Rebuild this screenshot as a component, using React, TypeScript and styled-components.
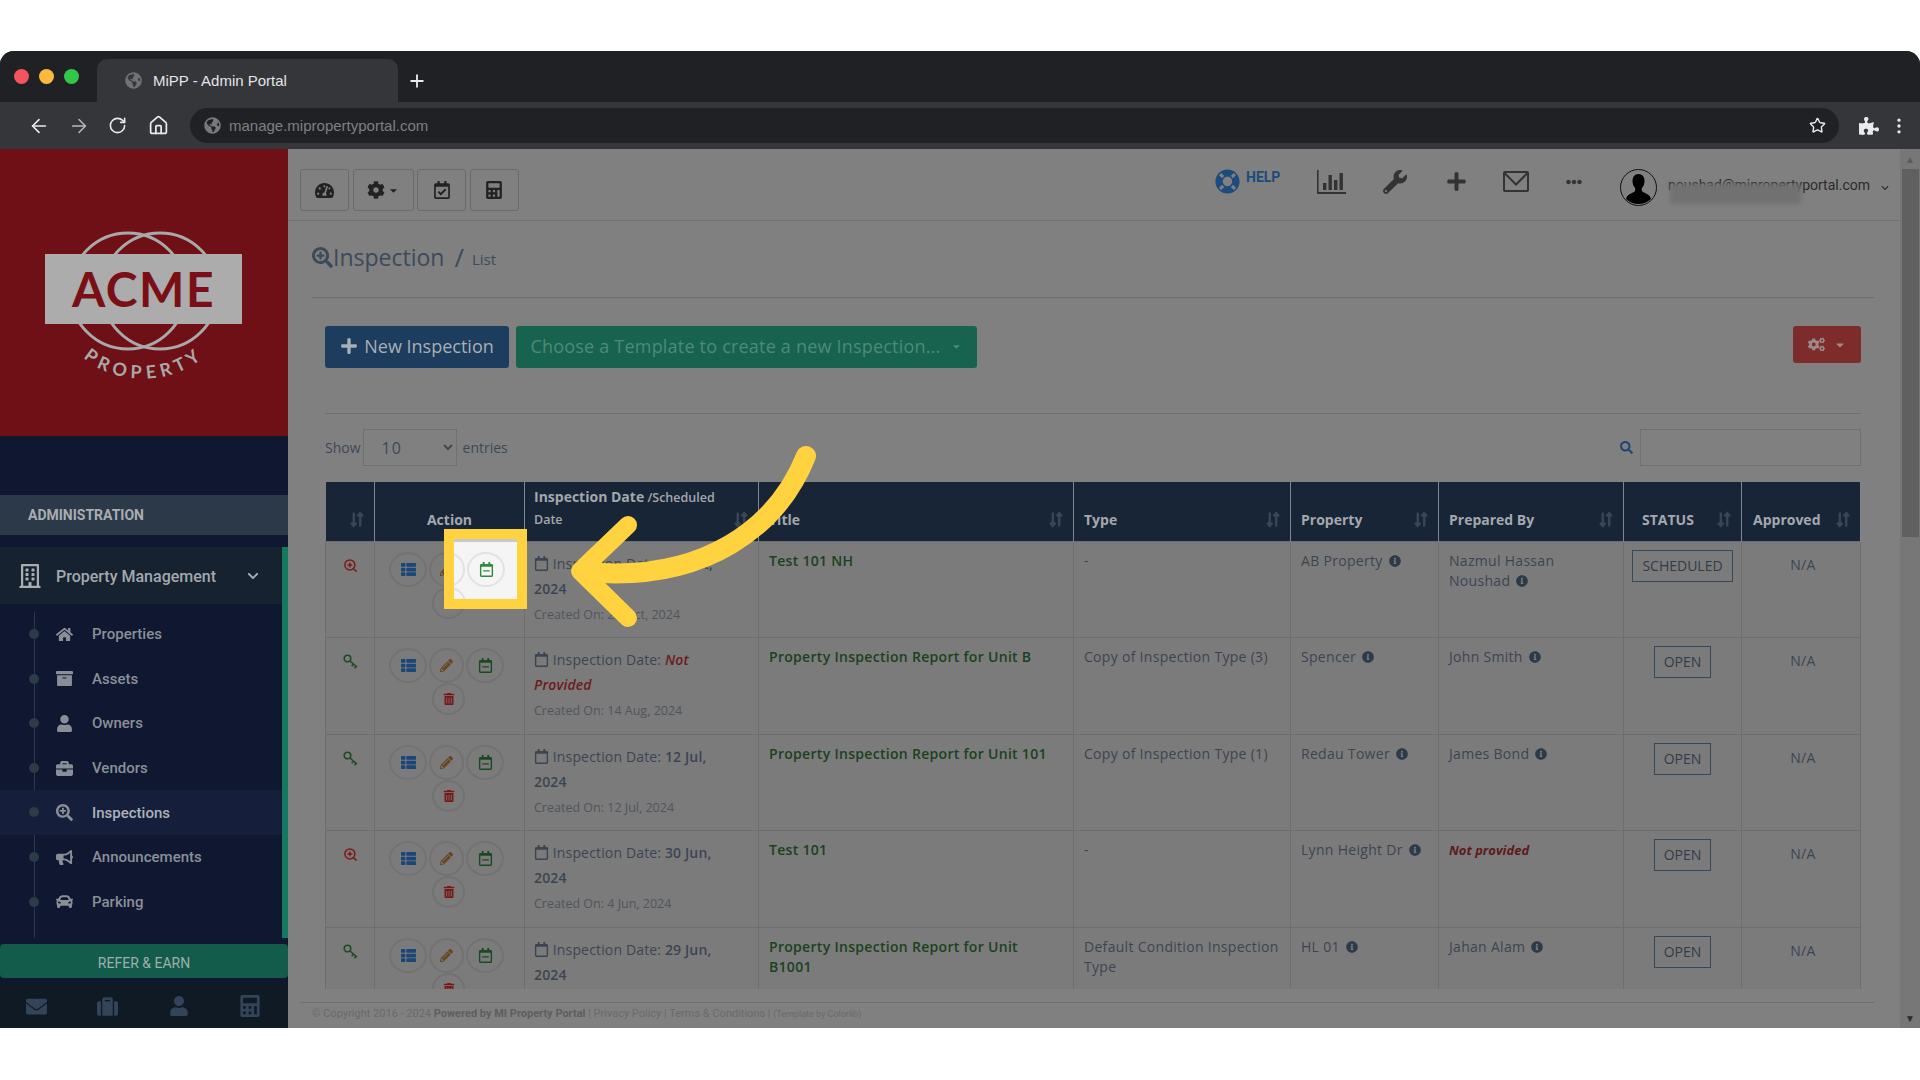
import React from "react";
import styled, { createGlobalStyle } from "styled-components";
import {
  FaTachometerAlt,
  FaCog,
  FaCogs,
  FaCaretDown,
  FaRegCalendarCheck,
  FaCalculator,
  FaLifeRing,
  FaWrench,
  FaPlus,
  FaEllipsisH,
  FaSearchPlus,
  FaSearch,
  FaRegBuilding,
  FaChevronDown,
  FaHome,
  FaArchive,
  FaUser,
  FaBriefcase,
  FaSuitcase,
  FaBullhorn,
  FaCar,
  FaEnvelope,
  FaThList,
  FaPencilAlt,
  FaRegCalendarMinus,
  FaTrashAlt,
  FaRegCalendar,
  FaInfoCircle,
  FaGlobeAmericas,
  FaPuzzlePiece,
  FaCalendarAlt
} from "react-icons/fa";
import { ArrowLeft, ArrowRight, RotateCw, Home, Star, Plus, EllipsisVertical, ZoomIn } from "lucide-react";

const GlobalStyle = createGlobalStyle`
  html, body {
    margin: 0;
    padding: 0;
    background: #fff;
    height: 1080px;
    overflow: hidden;
  }
  * { box-sizing: border-box; }
`;

const navItems = [
  { label: "Properties", icon: <FaHome /> },
  { label: "Assets", icon: <FaArchive /> },
  { label: "Owners", icon: <FaUser /> },
  { label: "Vendors", icon: <FaBriefcase /> },
  { label: "Inspections", icon: <FaSearchPlus />, active: true },
  { label: "Announcements", icon: <FaBullhorn /> },
  { label: "Parking", icon: <FaCar /> },
  { label: "", icon: <FaCalendarAlt /> }
];

const columns = [
  { label: "", pad: 9 },
  { label: "Action", center: true, pad: 9 },
  { label: "Inspection Date", sub: "/Scheduled Date", pad: 9 },
  { label: "Title", pad: 10 },
  { label: "Type", pad: 10 },
  { label: "Property", pad: 10 },
  { label: "Prepared By", pad: 10 },
  { label: "STATUS", pad: 18 },
  { label: "Approved", pad: 11 }
];

const colWidths = [49, 150, 234, 315, 217, 148, 185, 118, 119];

const rows = [
  {
    kind: "search",
    date: "23 Oct,",
    year: "2024",
    created: "23 Oct, 2024",
    title: "Test 101 NH",
    type: "-",
    property: "AB Property",
    preparedBy: "Nazmul Hassan Noushad",
    status: "SCHEDULED"
  },
  {
    kind: "key",
    date: "",
    created: "14 Aug, 2024",
    title: "Property Inspection Report for Unit B",
    type: "Copy of Inspection Type (3)",
    property: "Spencer",
    preparedBy: "John Smith",
    status: "OPEN"
  },
  {
    kind: "key",
    date: "12 Jul,",
    year: "2024",
    created: "12 Jul, 2024",
    title: "Property Inspection Report for Unit 101",
    type: "Copy of Inspection Type (1)",
    property: "Redau Tower",
    preparedBy: "James Bond",
    status: "OPEN"
  },
  {
    kind: "search",
    date: "30 Jun,",
    year: "2024",
    created: "4 Jun, 2024",
    title: "Test 101",
    type: "-",
    property: "Lynn Height Dr",
    preparedBy: "",
    status: "OPEN"
  },
  {
    kind: "key",
    date: "29 Jun,",
    year: "2024",
    created: "",
    title: "Property Inspection Report for Unit B1001",
    type: "Default Condition Inspection Type",
    property: "HL 01",
    preparedBy: "Jahan Alam",
    status: "OPEN"
  }
];

const App: React.FC<{}> = () => {
  return (
    <Page>
      <GlobalStyle />
      <BrowserWindow>
        <TabStrip>
          <Lights>
            <Light color="#f4545b" />
            <Light color="#fcb93f" />
            <Light color="#32c748" />
          </Lights>
          <Tab>
            <FaGlobeAmericas size={17} color="#6f7276" />
            <TabTitle>MiPP - Admin Portal</TabTitle>
          </Tab>
          <NewTab>
            <Plus size={20} strokeWidth={2.2} />
          </NewTab>
        </TabStrip>
        <Toolbar>
          <NavIcons>
            <ArrowLeft size={22} strokeWidth={1.8} />
            <ArrowRight size={22} strokeWidth={1.6} color="#b9bbbe" />
            <RotateCw size={19} />
            <HomeGlyph size={21} />
          </NavIcons>
          <AddressBar>
            <FaGlobeAmericas size={17} color="#76797d" />
            <Url>manage.mipropertyportal.com</Url>
            <Star size={17} color="#e8eaed" />
          </AddressBar>
          <ToolbarEnd>
            <FaPuzzlePiece size={20} />
            <EllipsisVertical size={20} />
          </ToolbarEnd>
        </Toolbar>

        <Viewport>
          <Sidebar>
            <LogoBlock>
              <AcmeLogo />
            </LogoBlock>
            <SectionBar>ADMINISTRATION</SectionBar>
            <SideMenu>
              <GroupRow>
                <FaRegBuilding size={24} color="#a9adb2" />
                <GroupLabel>Property Management</GroupLabel>
                <FaChevronDown size={12} color="#a9adb2" />
              </GroupRow>
              <NavList>
                {navItems.map((item, i) => (
                  <NavRow key={i} active={item.active}>
                    <NavDot />
                    <NavIcon>{item.icon}</NavIcon>
                    <NavLabel active={item.active}>{item.label}</NavLabel>
                  </NavRow>
                ))}
              </NavList>
            </SideMenu>
            <ReferButton>REFER &amp; EARN</ReferButton>
            <SideFooter>
              <FaEnvelope size={21} />
              <FaSuitcase size={21} />
              <FaUser size={20} />
              <FaCalculator size={22} />
            </SideFooter>
          </Sidebar>

          <Main>
            <TopBar>
              <ButtonGroup>
                <TopButton>
                  <FaTachometerAlt size={19} />
                </TopButton>
                <TopButton wide>
                  <FaCog size={18} />
                  <FaCaretDown size={11} />
                </TopButton>
                <TopButton>
                  <FaRegCalendarCheck size={18} />
                </TopButton>
                <TopButton>
                  <FaCalculator size={18} />
                </TopButton>
              </ButtonGroup>
              <TopRight>
                <HelpLink>
                  <FaLifeRing size={25} />
                  <HelpText>HELP</HelpText>
                </HelpLink>
                <TopIcon width={65}>
                  <svg width="29" height="24" viewBox="0 0 29 24" fill="#333">
                    <path d="M0 0h1.6v22H29v2H0z" />
                    <path d="M6 13h3.4v7H6zM11.5 5h3.4v15h-3.4zM17 10h3.4v10H17zM22.5 3h3.4v17h-3.4z" />
                  </svg>
                </TopIcon>
                <TopIcon width={62}>
                  <FaWrench size={24} color="#333" />
                </TopIcon>
                <TopIcon width={60}>
                  <FaPlus size={21} color="#333" />
                </TopIcon>
                <TopIcon width={59}>
                  <svg width="26" height="21" viewBox="0 0 26 21" fill="none" stroke="#333" strokeWidth="2">
                    <rect x="1" y="1" width="24" height="19" rx="1" />
                    <path d="M1 1.500l12 12 12-12" />
                  </svg>
                </TopIcon>
                <TopIcon width={57}>
                  <FaEllipsisH size={16} color="#333" />
                </TopIcon>
                <UserBlock>
                  <svg width="37" height="37" viewBox="0 0 37 37">
                    <circle cx="18.500" cy="18.500" r="18" fill="#808080" stroke="#111" strokeWidth="1" />
                    <path
                      d="M18.500 5c-4 0-6 3-6 7 0 3 1 5 2.500 7 .6 1 .4 3-1 4-3 1.600-7 2.600-8 7a18 18 0 0 0 25 0c-1-4.400-5-5.400-8-7-1.400-1-1.600-3-1-4 1.500-2 2.500-4 2.500-7 0-4-2-7-6-7z"
                      fill="#000"
                    />
                  </svg>
                  <UserEmail>noushad@mipropertyportal.com</UserEmail>
                  <FaChevronDown size={8} color="#333" />
                  <EmailBlur />
                </UserBlock>
              </TopRight>
            </TopBar>

            <Content>
              <TitleRow>
                <FaSearchPlus size={21} color="#3c4a5a" />
                <PageTitle>Inspection</PageTitle>
                <TitleSlash>/</TitleSlash>
                <TitleSmall>List</TitleSmall>
              </TitleRow>
              <Panel>
                <ActionRow>
                  <PrimaryButton>
                    <FaPlus size={18} />
                    New Inspection
                  </PrimaryButton>
                  <TemplateButton>
                    Choose a Template to create a new Inspection...
                    <FaCaretDown size={11} />
                  </TemplateButton>
                  <ToolsButton>
                    <FaCogs size={17} />
                    <FaCaretDown size={12} />
                  </ToolsButton>
                </ActionRow>
                <TableControls>
                  <LengthControl>
                    Show
                    <LengthSelect defaultValue="10">
                      <option value="10">10</option>
                    </LengthSelect>
                    entries
                  </LengthControl>
                  <SearchControl>
                    <FaSearch size={13} color="#1e4673" />
                    <SearchInput />
                  </SearchControl>
                </TableControls>
                <TableClip>
                  <Table>
                    <colgroup>
                      {colWidths.map((w, i) => (
                        <col key={i} width={w} />
                      ))}
                    </colgroup>
                    <thead>
                      <tr>
                        {columns.map((col, i) => (
                          <HeadCell key={i} center={col.center} pad={col.pad}>
                            {col.label}
                            {col.sub && <HeadSub> {col.sub}</HeadSub>}
                            {i !== 1 && <SortMark />}
                          </HeadCell>
                        ))}
                      </tr>
                    </thead>
                    <tbody>
                      {rows.map(row => (
                        <BodyRow key={row.title}>
                          <IconCell>
                            {row.kind === "search" ? <ZoomIn size={15} strokeWidth={2.4} color="#7e1a1a" /> : <KeyMark />}
                          </IconCell>
                          <ActionCell>
                            <ActionWrap>
                              <CircleButton width={38}>
                                <FaThList size={15} color="#1a4778" />
                              </CircleButton>
                              <CircleButton width={35}>
                                <FaPencilAlt size={13} color="#66461c" />
                              </CircleButton>
                              <CircleButton width={38}>
                                <FaRegCalendarMinus size={15} color="#1a4a20" />
                              </CircleButton>
                              <CircleButton width={33} short>
                                <FaTrashAlt size={12} color="#7a1818" />
                              </CircleButton>
                            </ActionWrap>
                          </ActionCell>
                          <DateCell>
                            <DateLine>
                              <FaRegCalendar size={15} />
                              &nbsp;Inspection Date:{" "}
                              {row.date ? <DateValue>{row.date}</DateValue> : <NotProvided>Not</NotProvided>}
                            </DateLine>
                            <DateLine>
                              {row.year ? <DateValue>{row.year}</DateValue> : <NotProvided>Provided</NotProvided>}
                            </DateLine>
                            {row.created && <CreatedLine>Created On: {row.created}</CreatedLine>}
                          </DateCell>
                          <TitleCell>{row.title}</TitleCell>
                          <TextCell>{row.type}</TextCell>
                          <TextCell>
                            {row.property} <InfoIcon size={12} />
                          </TextCell>
                          <TextCell>
                            {row.preparedBy ? (
                              <>
                                {row.preparedBy} <InfoIcon size={12} />
                              </>
                            ) : (
                              <MissingPerson>Not provided</MissingPerson>
                            )}
                          </TextCell>
                          <StatusCell>
                            <StatusBadge>{row.status}</StatusBadge>
                          </StatusCell>
                          <ApprovedCell>N/A</ApprovedCell>
                        </BodyRow>
                      ))}
                    </tbody>
                  </Table>
                </TableClip>
              </Panel>
            </Content>

            <PageFooter>
              © Copyright 2016 - 2024 <FooterStrong>Powered by MI Property Portal</FooterStrong> | Privacy Policy | Terms
              &amp; Conditions | <FooterSmall>(Template by Colorlib)</FooterSmall>
            </PageFooter>
          </Main>

          <ScrollTrack>
            <ScrollArrow>▲</ScrollArrow>
            <ScrollThumb />
            <ScrollArrow>▼</ScrollArrow>
          </ScrollTrack>

          <Spotlight>
            <SpotlightEdge />
            <GhostCircle />
            <GhostDelete />
            <SpotlightButton>
              <FaRegCalendarMinus size={15} color="#2f8a3c" />
            </SpotlightButton>
          </Spotlight>
          <PointerArrow width="270" height="190" viewBox="0 0 270 190" fill="none" stroke="#ffd23f" strokeLinecap="round" strokeLinejoin="round">
            <path d="M250 15C222 85 150 142 30 131" strokeWidth="20" />
            <path d="M72 84L24 130L72 177" strokeWidth="18" />
          </PointerArrow>
        </Viewport>
      </BrowserWindow>
    </Page>
  );
};

export default App;

const AcmeLogo: React.FC<{}> = () => (
  <svg width="288" height="287" viewBox="0 0 288 287">
    <g fill="none" stroke="#a9a9a9" strokeWidth="3">
      <circle cx="128" cy="142" r="58" />
      <circle cx="160" cy="142" r="58" />
    </g>
    <rect x="45" y="105" width="197" height="70" fill="#acacac" />
    <text x="143.500" y="158" textAnchor="middle" fontFamily="Lato, sans-serif" fontWeight="700" fontSize="48" letterSpacing="1.500" fill="#7a1016">
      ACME
    </text>
    <path id="logoArc" d="M80 205C110 238 178 238 208 203" fill="none" />
    <text fontFamily="Lato, sans-serif" fontWeight="700" fontSize="18" letterSpacing="5" fill="#a9a9a9">
      <textPath href="#logoArc" startOffset="50%" textAnchor="middle">
        PROPERTY
      </textPath>
    </text>
  </svg>
);

const KeyMark: React.FC<{}> = () => (
  <svg width="15" height="15" viewBox="0 0 15 15" fill="none" stroke="#1f4a25" strokeWidth="1.600">
    <circle cx="4.500" cy="4.500" r="3.300" />
    <path d="M7 7l7 6M10.500 10l-1.800 2.200M13 12.200l-1.500 2" />
  </svg>
);

const Page = styled.div`
  width: 1920px;
  height: 1080px;
  padding-top: 51px;
  background: #fff;
  overflow: hidden;
  font-family: "Open Sans", sans-serif;
`;

const BrowserWindow = styled.div`
  width: 1920px;
  height: 977px;
  border-radius: 14px 14px 0 0;
  overflow: hidden;
  display: flex;
  flex-direction: column;
  background: #202124;
`;

const TabStrip = styled.div`
  height: 51px;
  display: flex;
  align-items: flex-end;
  background: #202124;
`;

const Lights = styled.div`
  width: 97px;
  height: 51px;
  padding: 18px 0 0 14px;
  display: flex;
  gap: 10px;
`;

const Light = styled.span<{ color: string }>`
  width: 15px;
  height: 15px;
  border-radius: 50%;
  background: ${p => p.color};
`;

const Tab = styled.div`
  width: 301px;
  height: 43px;
  padding: 0 0 0 28px;
  display: flex;
  align-items: center;
  gap: 11px;
  border-radius: 10px 10px 0 0;
  background: #35363a;
`;

const TabTitle = styled.span`
  font-family: "Liberation Sans", sans-serif;
  font-size: 15px;
  color: #e3e5e8;
`;

const NewTab = styled.div`
  height: 43px;
  margin-left: 9px;
  display: flex;
  align-items: center;
  color: #e8eaed;
`;

const Toolbar = styled.div`
  height: 47px;
  display: flex;
  align-items: center;
  background: #35363a;
`;

const NavIcons = styled.div`
  width: 190px;
  padding-left: 28px;
  display: flex;
  align-items: center;
  gap: 18px;
  color: #e8eaed;
`;

const HomeGlyph = styled(Home)`
  margin-left: 3px;
`;

const AddressBar = styled.div`
  width: 1649px;
  height: 35px;
  padding: 0 13px 0 14px;
  display: flex;
  align-items: center;
  gap: 8px;
  border-radius: 18px;
  background: #202124;
`;

const Url = styled.span`
  flex: 1;
  font-family: "Liberation Sans", sans-serif;
  font-size: 15px;
  color: #7d7f82;
`;

const ToolbarEnd = styled.div`
  flex: 1;
  padding-left: 20px;
  display: flex;
  align-items: center;
  gap: 10px;
  color: #e8eaed;
`;

const Viewport = styled.div`
  position: relative;
  flex: 1;
  min-height: 0;
  display: flex;
  overflow: hidden;
  background: #808080;
`;

const Sidebar = styled.aside`
  width: 288px;
  flex: none;
  display: flex;
  flex-direction: column;
  background: #0f1731;
  font-family: Roboto, sans-serif;
`;

const LogoBlock = styled.div`
  height: 287px;
  margin-bottom: 59px;
  background: #6e1015;
`;

const SectionBar = styled.div`
  height: 40px;
  margin-bottom: 12px;
  padding-left: 28px;
  display: flex;
  align-items: center;
  background: #2c3948;
  color: #a9adb2;
  font-size: 14px;
  font-weight: 700;
`;

const SideMenu = styled.div`
  height: 391px;
  border-right: 6px solid #127a5f;
  display: flex;
  flex-direction: column;
`;

const GroupRow = styled.div`
  height: 57px;
  flex: none;
  padding: 0 23px 0 18px;
  display: flex;
  align-items: center;
  background: #172230;
`;

const GroupLabel = styled.span`
  flex: 1;
  margin-left: 14px;
  padding-top: 2px;
  font-size: 16px;
  font-weight: 500;
  color: #a4a8ae;
`;

const NavList = styled.div`
  position: relative;
  flex: 1;
  min-height: 0;
  padding-top: 8px;
  overflow: hidden;
  &::before {
    content: "";
    position: absolute;
    left: 34px;
    top: 8px;
    bottom: 0;
    width: 1px;
    background: #2b3846;
  }
`;

const NavRow = styled.div<{ active?: boolean }>`
  position: relative;
  height: 44.600px;
  padding-left: 56px;
  display: flex;
  align-items: center;
  background: ${p => (p.active ? "#151e3a" : "transparent")};
`;

const NavDot = styled.span`
  position: absolute;
  left: 29px;
  top: 17px;
  width: 10px;
  height: 10px;
  border-radius: 50%;
  background: #2c3b45;
`;

const NavIcon = styled.span`
  width: 36px;
  display: flex;
  font-size: 17px;
  color: #8a8f97;
`;

const NavLabel = styled.span<{ active?: boolean }>`
  font-size: 15px;
  font-weight: 500;
  color: ${p => (p.active ? "#aeb2b8" : "#8a8f97")};
`;

const ReferButton = styled.div`
  height: 34px;
  margin-top: 6px;
  padding-top: 3px;
  display: flex;
  align-items: center;
  justify-content: center;
  border-radius: 4px;
  background: #135c4b;
  color: #9db0aa;
  font-size: 14px;
`;

const SideFooter = styled.div`
  height: 44px;
  margin-top: 6px;
  padding: 0 27px 0 26px;
  display: flex;
  align-items: center;
  justify-content: space-between;
  background: #0f1a25;
  color: #33445a;
`;

const Main = styled.main`
  flex: 1;
  min-width: 0;
  display: flex;
  flex-direction: column;
`;

const TopBar = styled.header`
  height: 72px;
  flex: none;
  padding: 20px 0 0 12px;
  display: flex;
  justify-content: space-between;
  border-bottom: 1px solid #727272;
`;

const ButtonGroup = styled.div`
  display: flex;
  gap: 3.500px;
`;

const TopButton = styled.div<{ wide?: boolean }>`
  width: ${p => (p.wide ? "61px" : "49px")};
  height: 42px;
  display: flex;
  align-items: center;
  justify-content: center;
  gap: 3px;
  border: 1px solid #6b6b6b;
  border-radius: 3px;
  color: #222;
`;

const TopRight = styled.div`
  display: flex;
  align-items: flex-start;
`;

const HelpLink = styled.div`
  width: 84px;
  display: flex;
  gap: 6px;
  color: #1d4c7c;
`;

const HelpText = styled.span`
  font-family: Roboto, sans-serif;
  font-size: 14px;
  font-weight: 700;
`;

const TopIcon = styled.div<{ width: number }>`
  width: ${p => p.width}px;
  height: 25px;
  display: flex;
  align-items: center;
  justify-content: center;
`;

const UserBlock = styled.div`
  position: relative;
  width: 298px;
  padding-left: 18px;
  display: flex;
  align-items: center;
  gap: 11px;
`;

const UserEmail = styled.span`
  margin-top: -5px;
  font-family: Roboto, sans-serif;
  font-size: 14px;
  color: #2b2b2b;
`;

const EmailBlur = styled.span`
  position: absolute;
  left: 68px;
  top: 15px;
  width: 131px;
  height: 20px;
  background: #717171;
  filter: blur(2px);
`;

const Content = styled.div`
  flex: 1;
  min-height: 0;
  padding: 0 26px 0 24px;
  display: flex;
  flex-direction: column;
`;

const TitleRow = styled.div`
  height: 77px;
  flex: none;
  padding-bottom: 4px;
  display: flex;
  align-items: center;
  border-bottom: 1px solid #6e6e6e;
  color: #3c4a5a;
`;

const PageTitle = styled.h1`
  margin: 0;
  font-size: 23px;
  font-weight: 400;
`;

const TitleSlash = styled.span`
  margin: 0 8px 0 10px;
  font-size: 26px;
`;

const TitleSmall = styled.span`
  margin-top: 4px;
  font-size: 15px;
`;

const Panel = styled.section`
  flex: 1;
  min-height: 0;
  padding: 28px 13px 0;
  display: flex;
  flex-direction: column;
`;

const ActionRow = styled.div`
  height: 88px;
  flex: none;
  display: flex;
  align-items: flex-start;
  gap: 7px;
  border-bottom: 1px solid #6e6e6e;
`;

const PrimaryButton = styled.div`
  width: 184px;
  height: 42px;
  padding-bottom: 2px;
  display: flex;
  align-items: center;
  justify-content: center;
  gap: 6px;
  border-radius: 3px;
  background: #1c3d5e;
  color: #a9afb6;
  font-size: 18px;
`;

const TemplateButton = styled.div`
  width: 461px;
  height: 42px;
  padding-bottom: 2px;
  display: flex;
  align-items: center;
  justify-content: center;
  gap: 11px;
  border-radius: 3px;
  background: #176350;
  color: #4f8a78;
  font-size: 18px;
  letter-spacing: 0.2px;
`;

const ToolsButton = styled.div`
  width: 68px;
  height: 37px;
  margin-left: auto;
  display: flex;
  align-items: center;
  justify-content: center;
  gap: 9px;
  border-radius: 3px;
  background: #7d2b2b;
  color: #9c8b8b;
`;

const TableControls = styled.div`
  height: 68px;
  flex: none;
  padding-top: 15px;
  display: flex;
  justify-content: space-between;
  align-items: flex-start;
`;

const LengthControl = styled.label`
  display: flex;
  align-items: center;
  gap: 3px;
  font-size: 14px;
  color: #3e4854;
`;

const LengthSelect = styled.select`
  width: 94px;
  height: 37px;
  margin: 0 3px 0 -1px;
  padding-left: 14px;
  border: 1px solid #707070;
  border-radius: 0;
  background: #808080;
  font-family: "Open Sans", sans-serif;
  font-size: 16px;
  letter-spacing: 1px;
  color: #3e4854;
`;

const SearchControl = styled.div`
  display: flex;
  align-items: center;
  gap: 7px;
`;

const SearchInput = styled.input`
  width: 221px;
  height: 37px;
  border: 1px solid #707070;
  background: #808080;
`;

const TableClip = styled.div`
  flex: 1;
  min-height: 0;
  overflow: hidden;
`;

const Table = styled.table`
  width: 1535px;
  table-layout: fixed;
  border-collapse: collapse;
  font-size: 14px;
  letter-spacing: 0.3px;
  color: #3b4552;
`;

const HeadCell = styled.th<{ center?: boolean; pad: number }>`
  position: relative;
  height: 59px;
  padding: 4px ${p => (p.center ? p.pad : 22)}px 11px ${p => p.pad}px;
  vertical-align: bottom;
  text-align: ${p => (p.center ? "center" : "left")};
  border-right: 1px solid #7d8691;
  background: #182536;
  color: #a4a8ae;
  font-size: 14px;
  font-weight: 700;
  line-height: 21px;
  letter-spacing: 0;
`;

const HeadSub = styled.span`
  font-size: 12.500px;
  font-weight: 600;
`;

// the two opposed arrows that mark a sortable column
const SortMark: React.FC<{}> = () => (
  <SortGlyph width="14" height="17" viewBox="0 0 13 15" fill="none" stroke="#3a4656" strokeWidth="2.200">
    <path d="M3.500 1v12M1 10.500l2.500 3 2.500-3M9.500 14V2M7 4.500l2.500-3 2.500 3" />
  </SortGlyph>
);

const SortGlyph = styled.svg`
  position: absolute;
  right: 10px;
  bottom: 13px;
`;

const BodyRow = styled.tr`
  height: 96.400px;
  background: #7b7b7b;
  td {
    border: 1px solid #6e6e6e;
    vertical-align: top;
  }
`;

const IconCell = styled.td`
  padding-top: 16px;
  text-align: center;
`;

const ActionCell = styled.td`
  padding: 10px 20px 0 14px;
`;

const ActionWrap = styled.div`
  height: 84px;
  display: flex;
  flex-wrap: wrap;
  align-content: flex-start;
  justify-content: center;
  column-gap: 2px;
`;

const CircleButton = styled.span<{ width: number; short?: boolean }>`
  width: ${p => p.width}px;
  height: ${p => (p.short ? 32 : 35)}px;
  margin-left: ${p => (p.short ? "4px" : 0)};
  display: flex;
  align-items: center;
  justify-content: center;
  border: 2px solid #727272;
  border-radius: 50%;
`;

const DateCell = styled.td`
  padding: 9px 4px 0 9px;
`;

const DateLine = styled.div`
  height: 25px;
  line-height: 25px;
  white-space: nowrap;
  letter-spacing: 0.15px;
  color: #3b4552;
  svg {
    vertical-align: -2px;
  }
`;

const DateValue = styled.span`
  font-weight: 600;
`;

const NotProvided = styled.em`
  font-weight: 600;
  color: #6e1a1a;
`;

const CreatedLine = styled.div`
  height: 25px;
  line-height: 27px;
  font-size: 12.500px;
  letter-spacing: 0;
  color: #50555c;
`;

const TitleCell = styled.td`
  padding: 9px 20px 0 10px;
  line-height: 20px;
  font-weight: 600;
  color: #1a4220;
`;

const TextCell = styled.td`
  padding: 9px 8px 0 10px;
  line-height: 20px;
  color: #3b4552;
`;

const InfoIcon = styled(FaInfoCircle)`
  vertical-align: -1px;
  margin-left: 2px;
  color: #2d3a4a;
`;

const MissingPerson = styled.em`
  font-size: 13px;
  font-weight: 700;
  letter-spacing: 0;
  color: #5e1a1a;
`;

const StatusCell = styled.td`
  padding-top: 8px;
  text-align: center;
`;

const StatusBadge = styled.span`
  display: inline-block;
  padding: 4px 9px;
  border: 1px solid #36485c;
  line-height: 22px;
  letter-spacing: 0;
  color: #313c49;
`;

const ApprovedCell = styled.td`
  padding: 13px 0 0 4px;
  text-align: center;
`;

const PageFooter = styled.footer`
  height: 26px;
  flex: none;
  margin: 13px 26px 0 12px;
  padding-left: 12px;
  border-top: 1px solid #6e6e6e;
  font-family: Roboto, sans-serif;
  font-size: 11px;
  line-height: 22px;
  color: #6a6a6a;
`;

const FooterStrong = styled.strong`
  color: #5e5e5e;
`;

const FooterSmall = styled.span`
  font-size: 9px;
`;

const ScrollTrack = styled.div`
  width: 20px;
  flex: none;
  display: flex;
  flex-direction: column;
  align-items: center;
  justify-content: space-between;
  background: #777;
`;

const ScrollArrow = styled.span`
  height: 20px;
  font-size: 10px;
  line-height: 20px;
  color: #2a2a2a;
  &:first-child {
    color: #5a5a5a;
  }
`;

const ScrollThumb = styled.div`
  width: 17px;
  height: 368px;
  margin-bottom: auto;
  background: #606060;
`;

const Spotlight = styled.div`
  position: absolute;
  left: 444px;
  top: 380px;
  width: 83px;
  height: 80px;
  border: 10px solid #ffd23f;
  overflow: hidden;
  background: #f5f5f5;
`;

const SpotlightEdge = styled.div`
  height: 3px;
  background: #c9c9c9;
`;

const GhostCircle = styled.span`
  position: absolute;
  left: -24px;
  top: 13px;
  width: 35px;
  height: 35px;
  border: 2px solid #e2e2e2;
  border-radius: 50%;
`;

const GhostDelete = styled.span`
  position: absolute;
  left: -21px;
  top: 48px;
  width: 33px;
  height: 32px;
  border: 2px solid #e2e2e2;
  border-radius: 50%;
`;

const SpotlightButton = styled.span`
  position: absolute;
  left: 13px;
  top: 13px;
  width: 38px;
  height: 35px;
  display: flex;
  align-items: center;
  justify-content: center;
  border: 2px solid #e2e2e2;
  border-radius: 50%;
`;

const PointerArrow = styled.svg`
  position: absolute;
  left: 556px;
  top: 292px;
`;
